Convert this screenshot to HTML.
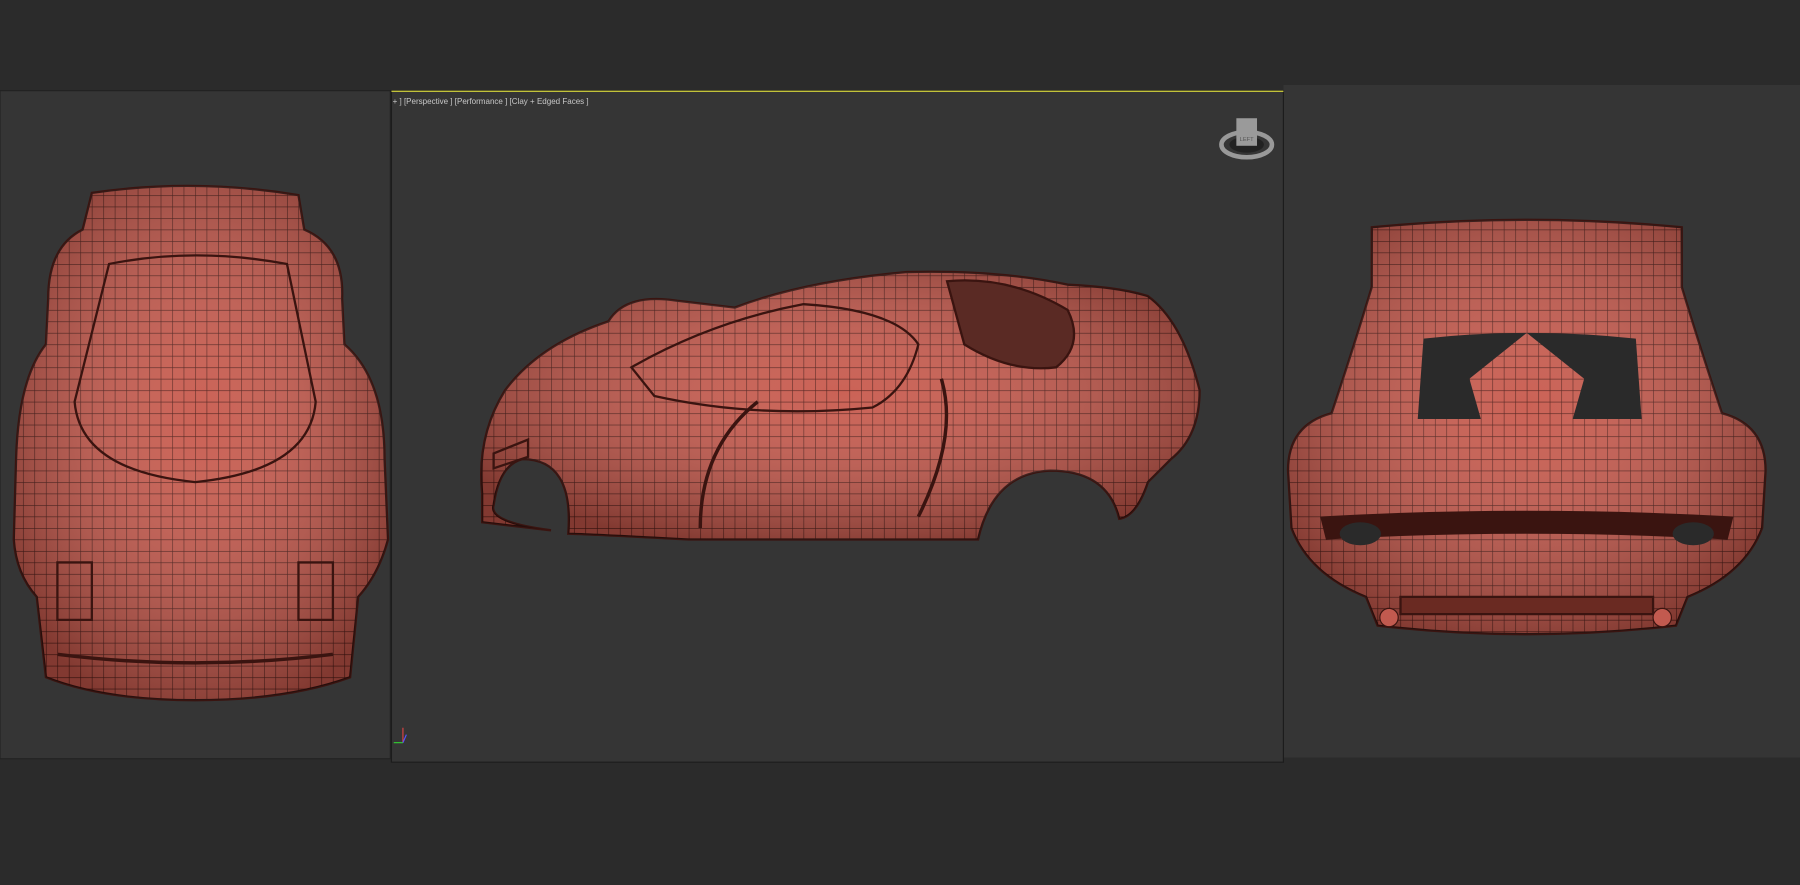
<!DOCTYPE html>
<html><head><meta charset="utf-8"><style>
html,body{margin:0;padding:0;background:#2b2b2b;overflow:hidden}
svg{display:block}
</style></head><body>
<svg width="1800" height="885" viewBox="0 0 1568 771" preserveAspectRatio="none" xmlns="http://www.w3.org/2000/svg">
<defs>
<pattern id="g" width="10" height="10" patternUnits="userSpaceOnUse">
<rect width="10" height="10" fill="#c8584b"/>
<path d="M0 0H10M0 0V10" stroke="#4a1712" stroke-width="1" fill="none"/>
</pattern>
<radialGradient id="sh" cx="50%" cy="45%" r="60%">
<stop offset="0" stop-color="#fff" stop-opacity="0.06"/>
<stop offset="1" stop-color="#000" stop-opacity="0.35"/>
</radialGradient>
</defs>
<rect width="1568" height="771" fill="#2b2b2b"/>
<rect x="0" y="79" width="340" height="582" fill="#353535"/>
<rect x="0" y="79" width="340" height="582" fill="none" stroke="#222" stroke-width="1"/>
<rect x="1118" y="74" width="450" height="586" fill="#353535"/>
<rect x="341" y="79" width="777" height="585" fill="#353535" stroke="#1c1c1c" stroke-width="1"/>
<line x1="341" y1="79.5" x2="1118" y2="79.5" stroke="#c2c23a" stroke-width="1.2"/>
<text x="342" y="90.5" font-family="Liberation Sans, sans-serif" font-size="7" fill="#c8c8c8">+ ] [Perspective ] [Performance ] [Clay + Edged Faces ]</text>
<ellipse cx="1086" cy="126" rx="22" ry="11" fill="none" stroke="#999" stroke-width="4"/>
<ellipse cx="1086" cy="126" rx="15" ry="7" fill="#222"/>
<rect x="1077" y="103" width="18" height="24" fill="#9a9a9a"/>
<text x="1086" y="123" font-family="Liberation Sans, sans-serif" font-size="5" fill="#555" text-anchor="middle">LEFT</text>
<path d="M351 647V634" stroke="#d44" stroke-width="1"/><path d="M343 647H351" stroke="#3c3" stroke-width="1"/><path d="M351 647L354 640" stroke="#55f" stroke-width="1"/>
<g>
<path d="M80 168 Q170 155 260 170 L265 200 Q300 215 298 260 L300 300 Q335 330 335 400 L338 470 Q330 500 312 520 L305 590 Q250 610 170 610 Q90 610 40 590 L32 520 Q14 500 12 470 L14 400 Q16 330 40 300 L42 260 Q42 215 72 200 Z" fill="url(#g)" stroke="#3a1410" stroke-width="2"/>
<path d="M80 168 Q170 155 260 170 L265 200 Q300 215 298 260 L300 300 Q335 330 335 400 L338 470 Q330 500 312 520 L305 590 Q250 610 170 610 Q90 610 40 590 L32 520 Q14 500 12 470 L14 400 Q16 330 40 300 L42 260 Q42 215 72 200 Z" fill="url(#sh)"/>
<path d="M95 230 Q170 215 250 230 L275 350 Q270 410 170 420 Q70 410 65 350 Z" fill="none" stroke="#3a1410" stroke-width="2"/>
<path d="M50 490h30v50h-30z M260 490h30v50h-30z" fill="none" stroke="#3a1410" stroke-width="2"/>
<path d="M50 570 Q170 585 290 570" fill="none" stroke="#3a1410" stroke-width="3"/>
</g>
<g>
<path d="M420 430 Q415 380 440 340 Q470 300 530 280 Q545 255 590 262 L640 268 Q700 245 790 237 Q870 235 930 248 Q975 250 1000 258 Q1030 280 1045 340 Q1045 380 1020 400 L1000 420 Q990 450 975 452 Q965 410 915 410 Q865 412 852 470 L600 470 Q505 465 495 465 Q500 400 455 400 Q435 405 430 440 Q425 455 480 462 L420 455 Z" fill="url(#g)" stroke="#3a1410" stroke-width="2"/>
<path d="M420 430 Q415 380 440 340 Q470 300 530 280 Q545 255 590 262 L640 268 Q700 245 790 237 Q870 235 930 248 Q975 250 1000 258 Q1030 280 1045 340 Q1045 380 1020 400 L1000 420 Q990 450 975 452 Q965 410 915 410 Q865 412 852 470 L600 470 Q505 465 495 465 Q500 400 455 400 Q435 405 430 440 Q425 455 480 462 L420 455 Z" fill="url(#sh)"/>
<path d="M825 245 Q880 240 930 270 Q945 300 920 320 Q880 325 840 300 Z" fill="#5a2a24" stroke="#3a1410" stroke-width="2"/>
<path d="M550 320 Q620 280 700 265 Q780 270 800 300 Q790 340 760 355 Q660 365 570 345 Z" fill="none" stroke="#3a1410" stroke-width="2"/>
<path d="M610 460 Q610 390 660 350 M820 330 Q835 380 800 450" fill="none" stroke="#3a1410" stroke-width="3"/>
<path d="M430 395l30 -12v15l-30 10z" fill="none" stroke="#3a1410" stroke-width="2"/>
</g>
<g>
<path d="M1195 198 Q1330 185 1465 198 L1465 250 Q1480 300 1500 360 Q1538 370 1538 410 L1535 460 Q1520 500 1470 520 L1460 545 Q1330 560 1200 545 L1190 520 Q1140 500 1125 460 L1122 410 Q1122 370 1160 360 Q1180 300 1195 250 Z" fill="url(#g)" stroke="#3a1410" stroke-width="2"/>
<path d="M1195 198 Q1330 185 1465 198 L1465 250 Q1480 300 1500 360 Q1538 370 1538 410 L1535 460 Q1520 500 1470 520 L1460 545 Q1330 560 1200 545 L1190 520 Q1140 500 1125 460 L1122 410 Q1122 370 1160 360 Q1180 300 1195 250 Z" fill="url(#sh)"/>
<path d="M1240 295 Q1330 285 1425 295 L1430 365 L1370 365 L1380 330 L1330 290 L1280 330 L1290 365 L1235 365 Z" fill="#2a2a2a"/>
<path d="M1150 450 Q1330 440 1510 450 L1505 470 Q1330 460 1155 470 Z" fill="#3a1410"/>
<ellipse cx="1185" cy="465" rx="18" ry="10" fill="#2a2a2a"/><ellipse cx="1475" cy="465" rx="18" ry="10" fill="#2a2a2a"/>
<path d="M1220 520h220v15h-220z" fill="#6a2a22" stroke="#3a1410" stroke-width="2"/>
<circle cx="1210" cy="538" r="8" fill="#c25a4f" stroke="#3a1410"/><circle cx="1448" cy="538" r="8" fill="#c25a4f" stroke="#3a1410"/>
</g>
</svg>
</body></html>
